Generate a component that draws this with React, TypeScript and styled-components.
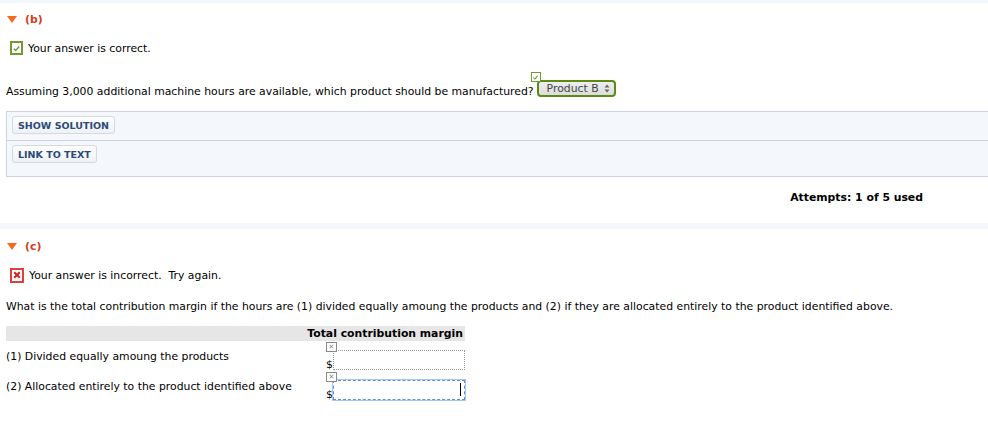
import React from "react";
import styled, { createGlobalStyle } from "styled-components";

const GlobalStyle = createGlobalStyle`
  body {
    margin: 0;
    background: #fff;
    font-family: Verdana, "DejaVu Sans", sans-serif;
    font-size: 10.85px;
    color: #000;
  }
`;

const Band = styled.div<{ $h: number }>`
  height: ${(p) => p.$h}px;
  background: #f4f7fb;
`;

const Part = styled.section`
  padding: 0 0 0 6px;
`;

const PartHeader = styled.div`
  display: flex;
  align-items: center;
  gap: 8px;
  height: 18px;
  margin-top: 7px;
  padding-left: 1px;
  font-weight: bold;
  color: #cf3f1c;
`;

const Triangle = styled.span`
  width: 0;
  height: 0;
  border-left: 5.5px solid transparent;
  border-right: 5.5px solid transparent;
  border-top: 7px solid #f26b21;
  margin-top: 1px;
`;

const Feedback = styled.div`
  display: flex;
  align-items: center;
  gap: 5px;
  height: 16px;
  padding-left: 4px;
`;

const MarkBox = styled.span<{ $bad?: boolean }>`
  display: inline-flex;
  align-items: center;
  justify-content: center;
  box-sizing: border-box;
  width: ${(p) => (p.$bad ? 14 : 13)}px;
  height: ${(p) => (p.$bad ? 15 : 14)}px;
  border: 2px solid ${(p) => (p.$bad ? "#e0403a" : "#6f9a34")};
  background: #fff;
`;

const Question = styled.div`
  display: flex;
  align-items: center;
  height: 20px;
  white-space: nowrap;
`;

const SelectWrap = styled.span`
  position: relative;
  margin-left: 3px;
  margin-top: -5px;
`;

const MiniTick = styled.span`
  position: absolute;
  left: -6px;
  top: -8px;
  box-sizing: border-box;
  width: 10px;
  height: 10px;
  background: #fff;
  border: 1px solid #6f9a34;
  display: flex;
  align-items: center;
  justify-content: center;
`;

const Select = styled.span`
  display: inline-flex;
  align-items: center;
  gap: 5px;
  box-sizing: border-box;
  height: 17px;
  padding: 0 4px 0 8px;
  border: 2px solid #5c8a14;
  border-radius: 4px;
  background: linear-gradient(#eeeeee, #dcdcdc);
  color: #444;
  white-space: nowrap;
`;

const Panel = styled.div`
  margin-top: 10px;
  border: 1px solid #cdd3de;
  border-right: none;
  background: #f4f7fb;
`;

const PanelRow = styled.div<{ $h: number; $last?: boolean }>`
  height: ${(p) => p.$h}px;
  padding: 4px 0 0 5px;
  box-sizing: border-box;
  border-bottom: ${(p) => (p.$last ? "none" : "1px solid #cdd3de")};
`;

const ToolButton = styled.span`
  display: inline-flex;
  align-items: center;
  height: 18px;
  box-sizing: border-box;
  padding: 0 5px;
  border: 1px solid #d6d9df;
  border-radius: 3px;
  background: linear-gradient(#ffffff, #eef1f5);
  font-size: 9.5px;
  font-weight: bold;
  color: #2d4a78;
`;

const Attempts = styled.div`
  height: 46px;
  box-sizing: border-box;
  padding: 0 65px 6px 0;
  display: flex;
  align-items: center;
  justify-content: flex-end;
  font-weight: bold;
`;

const Table = styled.div`
  width: 459px;
  margin-top: 10px;
`;

const TableHead = styled.div`
  height: 15px;
  background: #e6e6e6;
  display: flex;
  align-items: center;
  justify-content: flex-end;
  padding-right: 2px;
  font-weight: bold;
`;

const TableRow = styled.div`
  display: grid;
  grid-template-columns: 320px 139px;
  height: 30px;
  align-items: center;
`;

const Cell = styled.div`
  position: relative;
  display: flex;
  align-items: flex-end;
  height: 27px;
`;

const Dollar = styled.span`
  width: 7px;
  line-height: 11px;
`;

const MiniX = styled.span`
  position: absolute;
  left: 0;
  top: -1px;
  box-sizing: border-box;
  width: 11px;
  height: 10px;
  border: 1px solid #888;
  background: #fff;
  font-size: 7px;
  font-weight: bold;
  line-height: 8px;
  text-align: center;
  color: #888;
`;

const Input = styled.span<{ $focus?: boolean }>`
  display: flex;
  justify-content: flex-end;
  align-items: center;
  box-sizing: border-box;
  width: 132px;
  height: 20px;
  padding-right: 3px;
  border: 1px ${(p) => (p.$focus ? "dashed #5b8fd8" : "dotted #999")};
  box-shadow: ${(p) => (p.$focus ? "0 0 0 1px #a9c6ef" : "none")};
  background: #fff;
`;

const Caret = styled.span`
  width: 1px;
  height: 13px;
  background: #000;
`;

const Check = ({ size = 9 }: { size?: number }) => (
  <svg width={size} height={size} viewBox="0 0 10 10">
    <path d="M2 5.2 L4.2 7.2 L8 2.8" fill="none" stroke="#6f9a34" strokeWidth="1.6" />
  </svg>
);

const Cross = () => (
  <svg width="8" height="8" viewBox="0 0 8 8">
    <path d="M1.2 1.2 L6.8 6.8 M6.8 1.2 L1.2 6.8" stroke="#d8231d" strokeWidth="2" />
  </svg>
);

const Arrows = () => (
  <svg width="6" height="9" viewBox="0 0 6 9">
    <path d="M0.5 3.5 L3 0.5 L5.5 3.5 Z M0.5 5.5 L3 8.5 L5.5 5.5 Z" fill="#666" />
  </svg>
);

export default function App() {
  return (
    <>
      <GlobalStyle />
      <Band $h={3} />
      <Part>
        <PartHeader>
          <Triangle />
          (b)
        </PartHeader>
        <Feedback style={{ marginTop: 12 }}>
          <MarkBox>
            <Check />
          </MarkBox>
          Your answer is correct.
        </Feedback>
        <Question style={{ marginTop: 25 }}>
          Assuming 3,000 additional machine hours are available, which product should be manufactured?
          <SelectWrap>
            <MiniTick>
              <Check size={7} />
            </MiniTick>
            <Select>
              Product B <Arrows />
            </Select>
          </SelectWrap>
        </Question>
        <Panel>
          <PanelRow $h={29}>
            <ToolButton>SHOW SOLUTION</ToolButton>
          </PanelRow>
          <PanelRow $h={35} $last>
            <ToolButton>LINK TO TEXT</ToolButton>
          </PanelRow>
        </Panel>
        <Attempts>Attempts: 1 of 5 used</Attempts>
      </Part>
      <Band $h={6} />
      <Part>
        <PartHeader style={{ marginTop: 8 }}>
          <Triangle />
          (c)
        </PartHeader>
        <Feedback style={{ marginTop: 12 }}>
          <MarkBox $bad>
            <Cross />
          </MarkBox>
          Your answer is incorrect.&nbsp; Try again.
        </Feedback>
        <Question style={{ marginTop: 13 }}>
          What is the total contribution margin if the hours are (1) divided equally amoung the products and (2) if they
          are allocated entirely to the product identified above.
        </Question>
        <Table>
          <TableHead>Total contribution margin</TableHead>
          <TableRow>
            <span>(1) Divided equally amoung the products</span>
            <Cell>
              <MiniX>✕</MiniX>
              <Dollar>$</Dollar>
              <Input />
            </Cell>
          </TableRow>
          <TableRow>
            <span>(2) Allocated entirely to the product identified above</span>
            <Cell>
              <MiniX>✕</MiniX>
              <Dollar>$</Dollar>
              <Input $focus>
                <Caret />
              </Input>
            </Cell>
          </TableRow>
        </Table>
      </Part>
    </>
  );
}
